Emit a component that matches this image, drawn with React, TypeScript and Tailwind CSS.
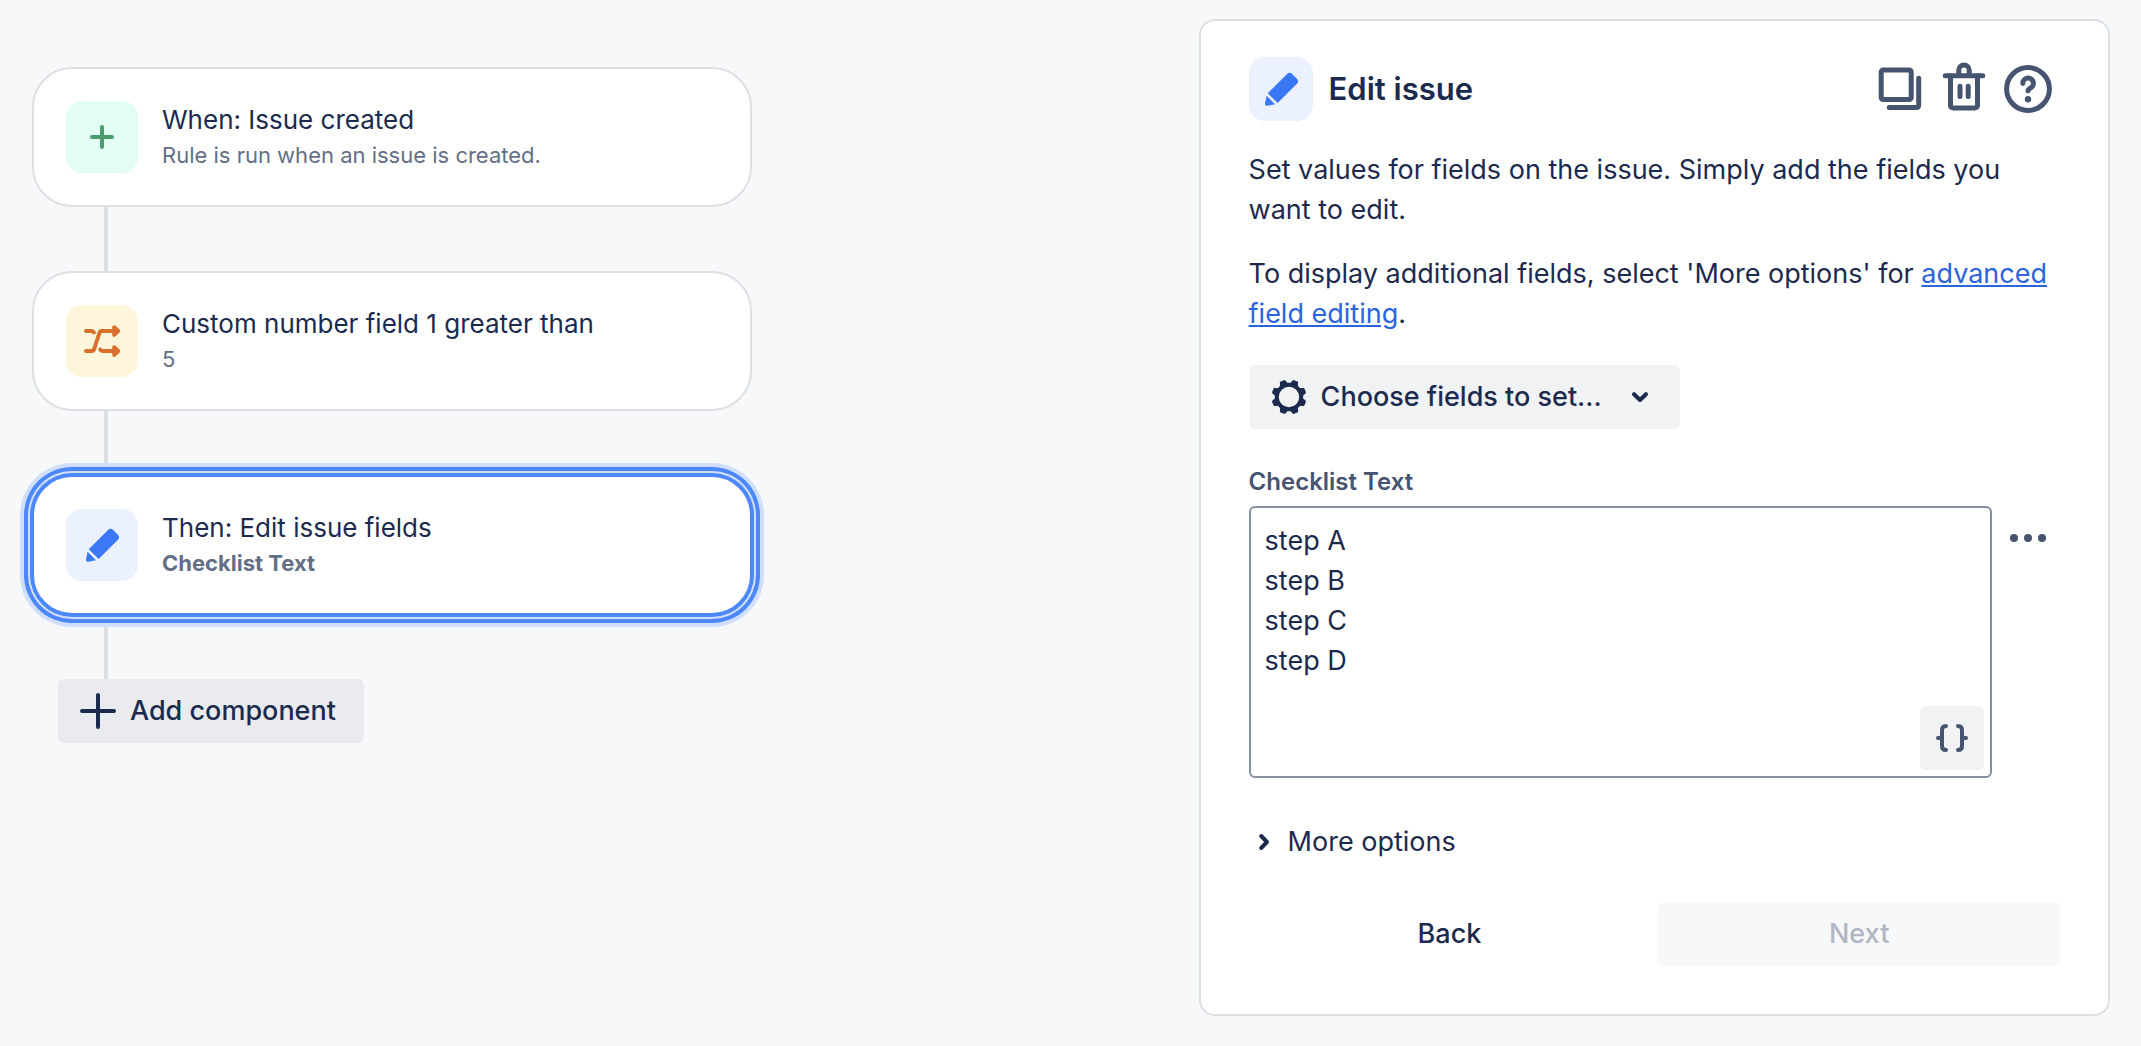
import { useState } from 'react';
import type { ReactNode } from 'react';

type RuleStep = {
  id: string;
  title: string;
  subtitle: string;
  boldSubtitle?: boolean;
  tone: string;
  icon: ReactNode;
};

function PencilIcon() {
  return (
    <svg viewBox="0 0 24 24" className="size-12" fill="currentColor" aria-hidden="true">
      <path d="M4.02 19.23a1 1 0 0 0 1.18 1.18l3.81-.78-4.21-4.2-.78 3.8z" />
      <path d="M19.84 6.71l-2.12-2.12a2 2 0 0 0-2.83 0L5.38 14.1l4.95 4.95 9.51-9.51a2 2 0 0 0 0-2.83z" />
    </svg>
  );
}

function SmallPlusIcon() {
  return (
    <svg viewBox="0 0 48 48" className="size-12" fill="none" stroke="currentColor" strokeWidth="4" strokeLinecap="round" aria-hidden="true">
      <path d="M24 14v20M14 24h20" />
    </svg>
  );
}

function ShuffleIcon() {
  return (
    <svg viewBox="0 0 48 48" className="size-12" fill="none" stroke="currentColor" strokeWidth="4" strokeLinecap="round" strokeLinejoin="round" aria-hidden="true">
      <path d="M8 34h5.5c1.6 0 2.2-.6 2.7-2l5.2-16c.5-1.4 1.1-2 2.7-2H37" />
      <path d="M8 14h5.5c1.2 0 1.9.4 2.4 1.5" />
      <path d="M22.2 32.5c.5 1.1 1.2 1.5 2.4 1.5H37" />
      <path d="M36.2 10.2l4 3.8-4 3.8zM36.2 30.2l4 3.8-4 3.8z" fill="currentColor" />
    </svg>
  );
}

function PlusIcon() {
  return (
    <svg viewBox="0 0 36 36" className="size-9" fill="none" stroke="currentColor" strokeWidth="4" strokeLinecap="round" aria-hidden="true">
      <path d="M18 2v32M2 18h32" />
    </svg>
  );
}

function CopyIcon() {
  return (
    <svg viewBox="0 0 48 48" className="size-12" fill="none" stroke="currentColor" strokeWidth="5" strokeLinecap="round" strokeLinejoin="round" aria-hidden="true">
      <rect x="5.2" y="5" width="30" height="29.5" rx="2" />
      <path d="M42.7 13.3v27.2a2 2 0 0 1-2 2H13.3" />
    </svg>
  );
}

function TrashIcon() {
  return (
    <svg viewBox="0 0 48 48" className="size-12 overflow-visible" fill="none" stroke="currentColor" strokeWidth="5" strokeLinecap="round" strokeLinejoin="round" aria-hidden="true">
      <path d="M5.2 10.7h37.6" />
      <path d="M18.8 9.5V5.3a5.2 5.2 0 0 1 10.4 0v4.2" />
      <path d="M10.5 11v29.5a2.5 2.5 0 0 0 2.5 2.5h22a2.5 2.5 0 0 0 2.5-2.5V11" />
      <path d="M20 21.2v10.4M28.2 21.2v10.4" />
    </svg>
  );
}

function HelpIcon() {
  return (
    <svg viewBox="0 0 48 48" className="size-12" fill="none" stroke="currentColor" strokeWidth="5" strokeLinecap="round" strokeLinejoin="round" aria-hidden="true">
      <circle cx="24" cy="24" r="21.4" />
      <path d="M18.8 18.5a5.3 5.3 0 1 1 8 4.4c-1.6 1-2.8 1.2-2.8 2.8" />
      <circle cx="24" cy="34.2" r="3.2" fill="currentColor" stroke="none" />
    </svg>
  );
}

const gearTeeth = [22.5, 67.5, 112.5, 157.5, 202.5, 247.5, 292.5, 337.5];

function GearIcon() {
  return (
    <svg viewBox="0 0 36 36" className="size-9" fill="currentColor" aria-hidden="true">
      <circle cx="18" cy="18" r="12.2" fill="none" stroke="currentColor" strokeWidth="4" />
      {gearTeeth.map((angle) => (
        <path key={angle} d="M13.4 6l1.6-4.6q.3-.9 1.2-.9h3.6q.9 0 1.2.9L22.6 6z" transform={`rotate(${angle} 18 18)`} />
      ))}
    </svg>
  );
}

function ChevronIcon({ className }: { className: string }) {
  return (
    <svg viewBox="0 0 20 20" className={className} fill="none" stroke="currentColor" strokeWidth="4" strokeLinecap="round" strokeLinejoin="round" aria-hidden="true">
      <path d="M4 7.2l6 5.8 6-5.8" />
    </svg>
  );
}

function BracesIcon() {
  return (
    <svg viewBox="0 0 48 48" className="size-12" fill="none" stroke="currentColor" strokeWidth="4" strokeLinecap="round" strokeLinejoin="round" aria-hidden="true">
      <path d="M18 12c-2.8 0-4 1.4-4 4v16c0 2.6 1.2 4 4 4M10 24h4" />
      <path d="M30 12c2.8 0 4 1.4 4 4v16c0 2.6-1.2 4-4 4M38 24h-4" />
    </svg>
  );
}

function MoreIcon() {
  return (
    <svg viewBox="0 0 48 48" className="size-12" fill="currentColor" aria-hidden="true">
      <circle cx="10" cy="24" r="4" />
      <circle cx="24" cy="24" r="4" />
      <circle cx="38" cy="24" r="4" />
    </svg>
  );
}

const steps: RuleStep[] = [
  {
    id: 'trigger',
    title: 'When: Issue created',
    subtitle: 'Rule is run when an issue is created.',
    tone: 'bg-[#e2fef4] text-[#4c9c6d]',
    icon: <SmallPlusIcon />,
  },
  {
    id: 'condition',
    title: 'Custom number field 1 greater than',
    subtitle: '5',
    tone: 'bg-[#fef6da] text-[#d8702c]',
    icon: <ShuffleIcon />,
  },
  {
    id: 'action',
    title: 'Then: Edit issue fields',
    subtitle: 'Checklist Text',
    boldSubtitle: true,
    tone: 'bg-[#ebf1fe] text-[#3b78f6]',
    icon: <PencilIcon />,
  },
];

const idleCard = 'border-[#dcdfe4]';
const selectedCard =
  'border-[#4c88fa] shadow-[0_0_0_2px_#4c88fa,0_0_0_4px_#cfdffc,0_0_0_8px_#4c88fa,0_0_0_12px_#cfdffc]';

export default function App() {
  const [selected, setSelected] = useState('action');
  const [text, setText] = useState('step A\nstep B\nstep C\nstep D');

  return (
    <div className="grid min-h-screen grid-cols-[32fr_25fr] items-start bg-[#f7f8fa] pt-[19px] pr-[31px] pb-[30px] pl-8 font-['Inter',sans-serif] text-[27px] leading-10 text-[#1c2b4d]">
      {/* Rule chain */}
      <ol className="max-w-[720px] pt-12">
        {steps.map((step) => (
          <li key={step.id}>
            <button
              type="button"
              onClick={() => setSelected(step.id)}
              className={`relative flex w-full items-center gap-6 rounded-[40px] border-2 bg-white p-8 text-left ${
                step.id === selected ? selectedCard : idleCard
              }`}
            >
              <span className={`flex size-[72px] shrink-0 items-center justify-center rounded-2xl ${step.tone}`}>
                {step.icon}
              </span>
              <span className="flex flex-col">
                <span className="text-[26px] leading-9">{step.title}</span>
                <span className={`text-[22px] leading-[34px] text-[#626f86] ${step.boldSubtitle ? 'font-bold' : ''}`}>
                  {step.subtitle}
                </span>
              </span>
            </button>
            <div className="ml-[72px] h-16 w-1 bg-[#dcdfe4]"></div>
          </li>
        ))}
        <li>
          <button type="button" className="ml-[26px] flex h-16 items-center gap-3.5 rounded-md bg-[#e9ebee] pr-7 pl-[22px] font-medium">
            <PlusIcon />
            Add component
          </button>
        </li>
      </ol>

      {/* Component settings */}
      <section className="rounded-2xl border-2 border-[#dcdfe4] bg-white px-12 pt-9 pb-12">
        <header className="flex items-center">
          <span className="flex size-16 items-center justify-center rounded-2xl bg-[#ebf1fe] text-[#3b78f6]">
            <PencilIcon />
          </span>
          <h1 className="ml-4 flex-1 text-[31px] font-semibold">Edit issue</h1>
          <div className="flex text-[#47546f]">
            <button type="button" aria-label="Duplicate" className="flex size-16 items-center justify-center">
              <CopyIcon />
            </button>
            <button type="button" aria-label="Delete" className="flex size-16 items-center justify-center">
              <TrashIcon />
            </button>
            <button type="button" aria-label="Help" className="flex size-16 items-center justify-center">
              <HelpIcon />
            </button>
          </div>
        </header>

        <p className="mt-[29px]">
          Set values for fields on the issue. Simply add the fields you want to edit.
        </p>
        <p className="mt-6">
          To display additional fields, select 'More options' for{' '}
          <a href="#" className="text-[#2b64dc] underline">advanced field editing</a>.
        </p>

        <button type="button" className="mt-[31px] flex h-16 items-center rounded-md bg-[#f1f2f4] pr-[30px] pl-[22px] font-medium">
          <GearIcon />
          <span className="ml-3.5">Choose fields to set...</span>
          <ChevronIcon className="ml-7 size-5" />
        </button>

        <label htmlFor="checklist-text" className="mt-[37px] mb-2 block text-[24px] leading-8 font-semibold text-[#47546f]">
          Checklist Text
        </label>
        <div className="flex items-start gap-1">
          <div className="relative flex-1">
            <textarea
              id="checklist-text"
              value={text}
              onChange={(e) => setText(e.target.value)}
              className="block h-[272px] w-full resize-none rounded-md border-2 border-[#8590a2] bg-white px-3.5 py-[13px] outline-none"
            />
            <button
              type="button"
              aria-label="Insert smart value"
              className="absolute right-2 bottom-2 flex size-16 items-center justify-center rounded-md bg-[#f1f2f4] text-[#47546f]"
            >
              <BracesIcon />
            </button>
          </div>
          <button type="button" aria-label="Field actions" className="flex size-16 items-center justify-center text-[#47546f]">
            <MoreIcon />
          </button>
        </div>

        <button type="button" className="mt-11 flex items-center gap-3.5 pl-[5px]">
          <ChevronIcon className="size-5 -rotate-90" />
          More options
        </button>

        <div className="mt-10 grid grid-cols-2 gap-2 font-medium">
          <button type="button" className="h-16 rounded-md">Back</button>
          <button type="button" disabled className="h-16 rounded-md bg-[#f7f8f9] text-[#b0b6c3]">Next</button>
        </div>
      </section>
    </div>
  );
}
